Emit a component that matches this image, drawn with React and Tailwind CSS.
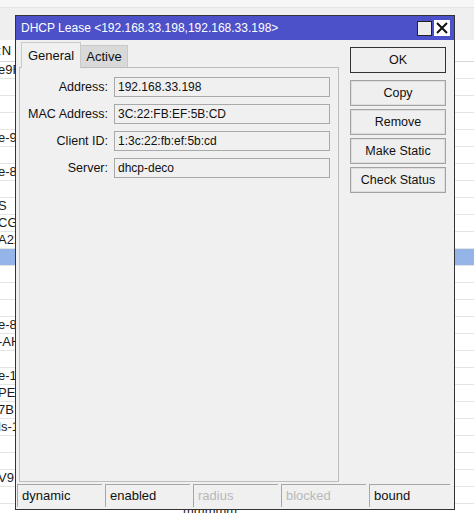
const rows = [
  'e9F', null, null, null, 'e-9', null, 'e-8', null, 'S', 'CG', 'A22', '', null,
  null, null, 'e-8', '-AH', null, 'e-1', 'PE', '7B', 'ls-1', null, null, 'V9', null, null,
]

const fields = [
  ['Address:', '192.168.33.198'],
  ['MAC Address:', '3C:22:FB:EF:5B:CD'],
  ['Client ID:', '1:3c:22:fb:ef:5b:cd'],
  ['Server:', 'dhcp-deco'],
]

const buttons = ['Copy', 'Remove', 'Make Static', 'Check Status']

const status = [
  ['dynamic', true],
  ['enabled', true],
  ['radius', false],
  ['blocked', false],
]

const LeaseDialog = () => {
  return (
    <div className="absolute left-[15px] top-[15px] w-[440px] h-[495px] border border-[#333] bg-[#f0f0f0] flex flex-col">
      {/* Title bar */}
      <div className="h-[24px] bg-[#4c51c9] flex items-center pl-[5px] pr-[4px]">
        <span className="text-white text-[12px] flex-1 whitespace-nowrap">
          DHCP Lease &lt;192.168.33.198,192.168.33.198&gt;
        </span>
        <div className="w-[15px] h-[15px] bg-[#ececec] border-[1.5px] border-[#222]" />
        <div className="ml-[2px] w-[16px] h-[16px] bg-white flex items-center justify-center">
          <svg width="14" height="14" viewBox="0 0 14 14">
            <path d="M2 2L12 12M12 2L2 12" stroke="#111" strokeWidth="2" />
          </svg>
        </div>
      </div>

      {/* Body */}
      <div className="flex-1 flex pl-[3px] min-h-0">
        <div className="w-[320px] flex flex-col">
          {/* Tabs */}
          <div className="h-[28px] flex items-end pl-[2px]">
            <div className="w-[60px] h-[26px] border border-b-0 border-[#c9c9c9] bg-[#f0f0f0] flex items-center justify-center text-[13px] text-[#111] relative z-10">
              General
            </div>
            <div className="w-[47px] h-[23px] border-t border-r border-[#c9c9c9] bg-[#d9d9d9] flex items-center justify-center text-[13px] text-[#111]">
              Active
            </div>
          </div>
          {/* Panel */}
          <div className="flex-1 -mt-px border border-[#bdbdbd] pt-[9px] flex flex-col gap-[7px]">
            {fields.map(([label, value]) => (
              <div key={label} className="flex items-center">
                <span className="w-[88px] text-right text-[12.5px] text-[#111] whitespace-nowrap">{label}</span>
                <div className="ml-[6px] w-[216px] h-[20px] border border-[#a9a9a9] bg-[#f0f0f0] flex items-center pl-[3px] text-[12px] text-[#111]">
                  {value}
                </div>
              </div>
            ))}
          </div>
        </div>

        {/* Buttons */}
        <div className="ml-[11px] w-[96px] pt-[7px] flex flex-col">
          <button className="h-[26px] border border-[#333] bg-[#efefef] text-[12.5px] text-[#111]">OK</button>
          <div className="mt-[7px] flex flex-col gap-[3px]">
            {buttons.map((b) => (
              <button
                key={b}
                className="h-[26px] border border-[#a3a3a3] shadow-[inset_0_0_0_1px_#dedede] bg-[#efefef] text-[12.5px] text-[#111]"
              >
                {b}
              </button>
            ))}
          </div>
        </div>
      </div>

      {/* Status bar */}
      <div className="h-[23px] mt-[2px] mb-[2px] flex gap-[3px] pl-[1px] pr-[4px]">
        {status.map(([s, on]) => (
          <div
            key={s}
            className={
              on
                ? 'w-[85px] border-t border-l border-[#a6a6a6] flex items-center pl-[4px] text-[13px] text-[#111]'
                : 'w-[85px] border-t border-l border-[#a6a6a6] flex items-center pl-[4px] text-[13px] text-[#b8b8b8]'
            }
          >
            {s}
          </div>
        ))}
        <div className="flex-1 border-t border-l border-[#a6a6a6] flex items-center pl-[4px] text-[13px] text-[#111]">
          bound
        </div>
      </div>
    </div>
  )
}

export default function App() {
  return (
    <div className="relative w-[474px] h-[513px] overflow-hidden bg-white font-['Liberation_Sans',Arial,sans-serif]">
      {/* Toolbar behind */}
      <div className="h-[8px] bg-[#f6f6f6] border-b border-[#e4e4e4]" />
      <div className="h-[32px] bg-[#efefef]" />
      {/* List header */}
      <div className="h-[22px] border-b border-[#d6d6d6] flex items-center text-[13px] whitespace-nowrap">
        <span className="-ml-[3px] text-[#2a6fd6]">t</span>
        <span className="ml-[1px] text-[#111]">N</span>
      </div>
      {/* List rows */}
      {rows.map((r, i) => (
        <div
          key={i}
          className={
            i === 11
              ? 'h-[17px] bg-[#95b5e8] border-b border-[#e4e4e4] flex items-center text-[13px] whitespace-nowrap'
              : 'h-[17px] border-b border-[#e4e4e4] flex items-center text-[13px] text-[#1c1c1c] whitespace-nowrap'
          }
        >
          {r && <span className="-ml-[2px]">{r}</span>}
          {i === 26 && <span className="ml-[183px] -mt-[2px]">mmmmm</span>}
        </div>
      ))}

      <LeaseDialog />
    </div>
  )
}
